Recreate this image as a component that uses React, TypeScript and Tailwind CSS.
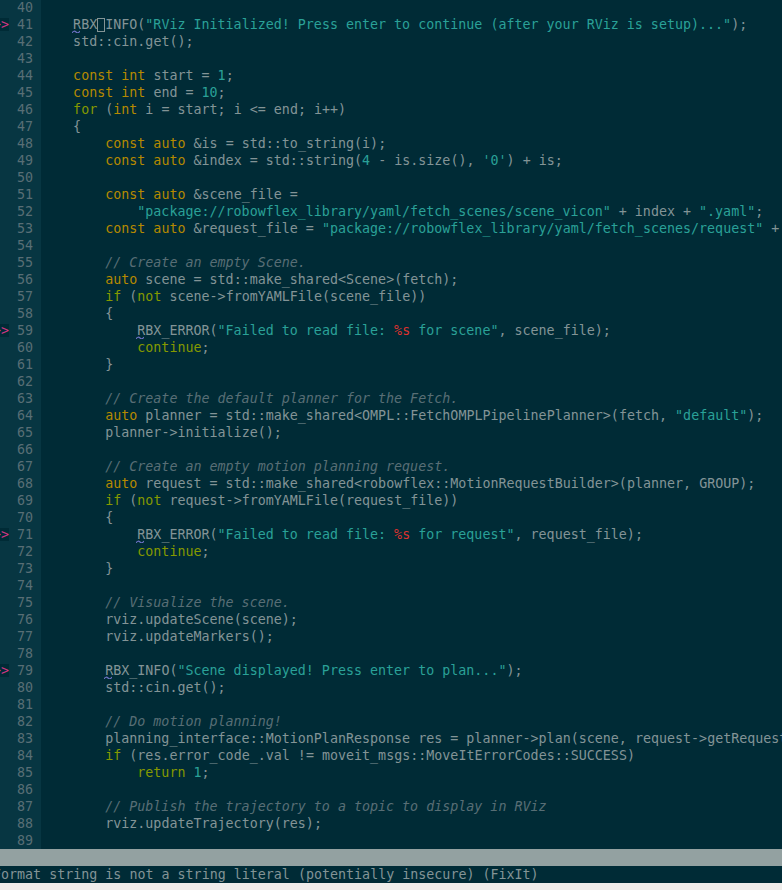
import React from 'react';

// Solarized dark palette
const YELLOW = new Set(['const', 'int', 'auto']);
const GREEN = new Set(['for', 'if', 'not', 'continue', 'return']);

type Line = { n: number; text: string; sign?: boolean; curl?: boolean; cursor?: number };

const lines: Line[] = [
  { n: 40, text: '' },
  { n: 41, text: '    RBX_INFO("RViz Initialized! Press enter to continue (after your RViz is setup)...");', sign: true, curl: true, cursor: 7 },
  { n: 42, text: '    std::cin.get();' },
  { n: 43, text: '' },
  { n: 44, text: '    const int start = 1;' },
  { n: 45, text: '    const int end = 10;' },
  { n: 46, text: '    for (int i = start; i <= end; i++)' },
  { n: 47, text: '    {' },
  { n: 48, text: '        const auto &is = std::to_string(i);' },
  { n: 49, text: "        const auto &index = std::string(4 - is.size(), '0') + is;" },
  { n: 50, text: '' },
  { n: 51, text: '        const auto &scene_file =' },
  { n: 52, text: '            "package://robowflex_library/yaml/fetch_scenes/scene_vicon" + index + ".yaml";' },
  { n: 53, text: '        const auto &request_file = "package://robowflex_library/yaml/fetch_scenes/request" + index + ".yaml";' },
  { n: 54, text: '' },
  { n: 55, text: '        // Create an empty Scene.' },
  { n: 56, text: '        auto scene = std::make_shared<Scene>(fetch);' },
  { n: 57, text: '        if (not scene->fromYAMLFile(scene_file))' },
  { n: 58, text: '        {' },
  { n: 59, text: '            RBX_ERROR("Failed to read file: %s for scene", scene_file);', sign: true, curl: true },
  { n: 60, text: '            continue;' },
  { n: 61, text: '        }' },
  { n: 62, text: '' },
  { n: 63, text: '        // Create the default planner for the Fetch.' },
  { n: 64, text: '        auto planner = std::make_shared<OMPL::FetchOMPLPipelinePlanner>(fetch, "default");' },
  { n: 65, text: '        planner->initialize();' },
  { n: 66, text: '' },
  { n: 67, text: '        // Create an empty motion planning request.' },
  { n: 68, text: '        auto request = std::make_shared<robowflex::MotionRequestBuilder>(planner, GROUP);' },
  { n: 69, text: '        if (not request->fromYAMLFile(request_file))' },
  { n: 70, text: '        {' },
  { n: 71, text: '            RBX_ERROR("Failed to read file: %s for request", request_file);', sign: true, curl: true },
  { n: 72, text: '            continue;' },
  { n: 73, text: '        }' },
  { n: 74, text: '' },
  { n: 75, text: '        // Visualize the scene.' },
  { n: 76, text: '        rviz.updateScene(scene);' },
  { n: 77, text: '        rviz.updateMarkers();' },
  { n: 78, text: '' },
  { n: 79, text: '        RBX_INFO("Scene displayed! Press enter to plan...");', sign: true, curl: true },
  { n: 80, text: '        std::cin.get();' },
  { n: 81, text: '' },
  { n: 82, text: '        // Do motion planning!' },
  { n: 83, text: '        planning_interface::MotionPlanResponse res = planner->plan(scene, request->getRequestConst());' },
  { n: 84, text: '        if (res.error_code_.val != moveit_msgs::MoveItErrorCodes::SUCCESS)' },
  { n: 85, text: '            return 1;' },
  { n: 86, text: '' },
  { n: 87, text: '        // Publish the trajectory to a topic to display in RViz' },
  { n: 88, text: '        rviz.updateTrajectory(res);' },
  { n: 89, text: '' },
];

const TOKEN = /(\/\/.*$)|("(?:[^"\\]|\\.)*")|('.')|(\b\d+\b)|([A-Za-z_]\w*)|(\s+)|(.)/g;

// split a string literal so that format specifiers come out red
const renderString = (s: string, key: string) =>
  s.split(/(%s)/).map((part, i) =>
    part === '%s' ? (
      <span key={key + i} className="text-[#dc322f]">{part}</span>
    ) : (
      <span key={key + i} className="text-[#2aa198]">{part}</span>
    )
  );

const highlight = (text: string) => {
  const out: React.ReactNode[] = [];
  let m: RegExpExecArray | null;
  let k = 0;
  TOKEN.lastIndex = 0;
  while ((m = TOKEN.exec(text))) {
    const key = 't' + k++;
    if (m[1]) out.push(<span key={key} className="italic text-[#586e75]">{m[1]}</span>);
    else if (m[2]) out.push(...renderString(m[2], key));
    else if (m[3] || m[4]) out.push(<span key={key} className="text-[#2aa198]">{m[0]}</span>);
    else if (m[5] && YELLOW.has(m[5])) out.push(<span key={key} className="text-[#b58900]">{m[5]}</span>);
    else if (m[5] && GREEN.has(m[5])) out.push(<span key={key} className="text-[#859900]">{m[5]}</span>);
    else out.push(m[0]);
  }
  return out;
};

const CodeLine: React.FC<{ line: Line }> = ({ line }) => {
  const indent = line.text.length - line.text.trimStart().length;
  let body: React.ReactNode;

  if (line.curl) {
    const cur = line.cursor;
    body = (
      <>
        {line.text.slice(0, indent)}
        <span className="relative">
          R
          {/* clangd undercurl */}
          <svg className="absolute left-[-1px] top-[13px]" width="8" height="4" viewBox="0 0 8 4">
            <path d="M0 3 Q2 0 4 2 T8 1" fill="none" stroke="#6c71c4" strokeWidth="1.2" />
          </svg>
        </span>
        {cur !== undefined ? (
          <>
            {highlight(line.text.slice(indent + 1, cur))}
            <span className="inline-block h-[14px] w-[8px] translate-y-[2px] border border-[#839496] align-top" />
            {highlight(line.text.slice(cur + 1))}
          </>
        ) : (
          highlight(line.text.slice(indent + 1))
        )}
      </>
    );
  } else {
    body = highlight(line.text);
  }

  return (
    <div className="flex h-[17px] leading-[17px]">
      <div className="flex w-[16px] shrink-0 items-center bg-[#073642]">
        {line.sign && (
          <span className="flex h-[13px] w-[16px] items-center bg-[#002b36] leading-[13px] text-[#d33682]">&gt;&gt;</span>
        )}
      </div>
      <div className="w-[32px] shrink-0 bg-[#073642] pr-[8px] text-right text-[#586e75]">{line.n}</div>
      <div className="min-w-0 flex-1 overflow-hidden whitespace-pre text-[#839496]">{body}</div>
    </div>
  );
};

const App: React.FC = () => {
  return (
    <div className="h-[890px] w-[782px] overflow-hidden bg-[#efedeb] font-['DejaVu_Sans_Mono',monospace] text-[13.33px]">
      <div className="-ml-[7px] -mt-[1px] w-[789px]">
        <div className="bg-[#002b36]">
          {lines.map(line => (
            <CodeLine key={line.n} line={line} />
          ))}
        </div>

        {/* status line */}
        <div className="h-[17px] bg-[#93a1a1]" />

        {/* message line */}
        <div className="h-[17px] whitespace-pre bg-[#002b36] leading-[17px] text-[#839496]">
          Format string is not a string literal (potentially insecure) (FixIt)
        </div>
      </div>
    </div>
  );
};

export default App;
